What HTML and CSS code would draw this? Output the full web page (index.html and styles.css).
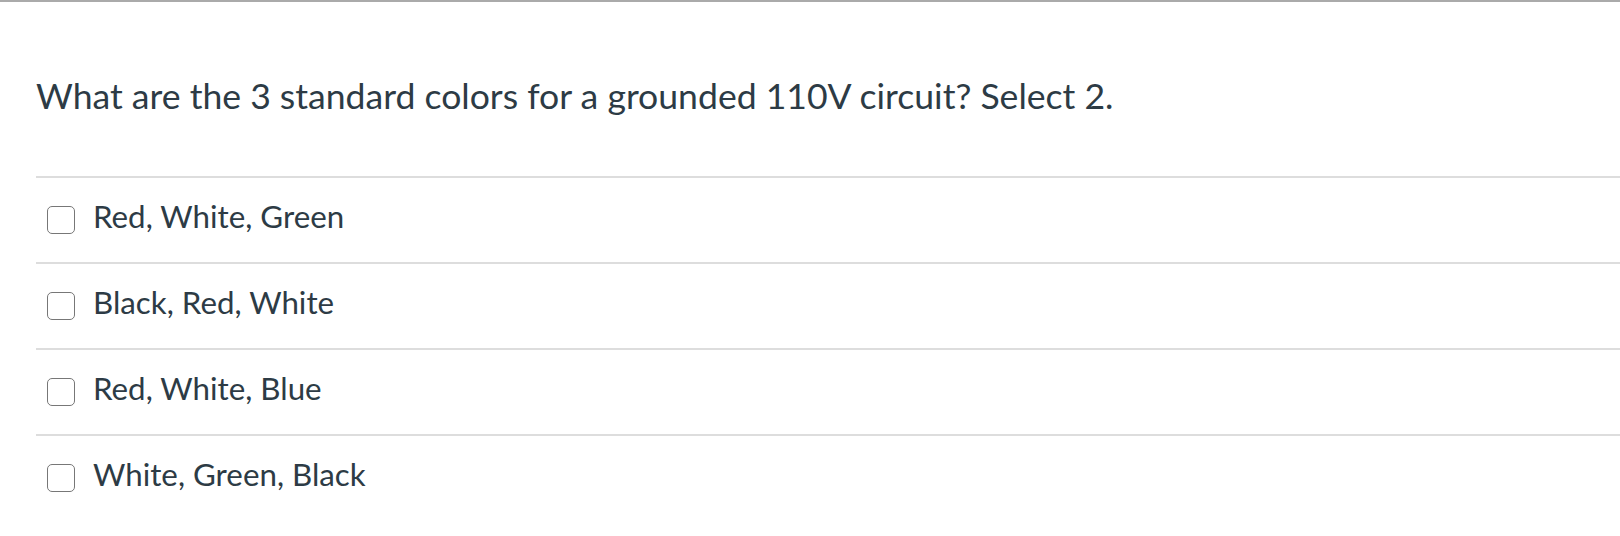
FILE: index.html
```html
<!DOCTYPE html>
<html lang="en">
<head>
<meta charset="utf-8">
<title>Quiz question</title>
<link rel="stylesheet" href="styles.css">
</head>
<body>
<div class="page">
  <div class="question">
    <p class="question-text">What are the 3 standard colors for a grounded 110V circuit? Select 2.</p>
    <div class="answers">
      <label class="answer"><span class="box"></span><span class="answer-text">Red, White, Green</span></label>
      <label class="answer"><span class="box"></span><span class="answer-text">Black, Red, White</span></label>
      <label class="answer"><span class="box"></span><span class="answer-text">Red, White, Blue</span></label>
      <label class="answer"><span class="box"></span><span class="answer-text">White, Green, Black</span></label>
    </div>
  </div>
</div>
</body>
</html>
```
FILE: styles.css
```css
html, body {
  margin: 0;
  padding: 0;
  background: #ffffff;
}
body {
  font-family: Lato, "Open Sans", sans-serif;
  color: #2d3b45;
}
.page {
  border-top: 2px solid #aaaaaa;
  min-height: 534px;
}
.question {
  padding: 72.5px 0 0 36px;
}
.question-text {
  margin: 0;
  font-size: 35.6px;
  line-height: 1.2;
}
.answers {
  margin-top: 58.5px;
  display: flex;
  flex-direction: column;
}
.answer {
  display: flex;
  align-items: center;
  gap: 18px;
  height: 84px;
  border-top: 2px solid #dddddd;
  padding-left: 11px;
}
.box {
  width: 26px;
  height: 26px;
  border: 1.5px solid #777777;
  border-radius: 5px;
  flex: none;
}
.answer-text {
  font-size: 31.3px;
  line-height: 1.2;
  padding-bottom: 5px;
}
```
